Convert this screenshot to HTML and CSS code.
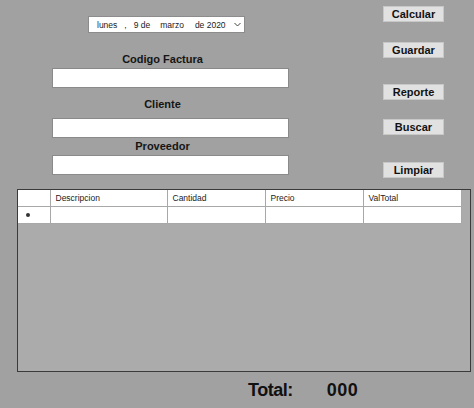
FILE: index.html
```html
<!DOCTYPE html>
<html lang="es">
<head>
<meta charset="utf-8">
<title>Factura</title>
<link rel="stylesheet" href="styles.css">
</head>
<body>
<div class="window">
  <div class="top">
    <div class="form">
      <div class="date">
        <span class="d-day">lunes</span>
        <span class="d-comma">,</span>
        <span class="d-num">9 de</span>
        <span class="d-month">marzo</span>
        <span class="d-year">de 2020</span>
        <svg class="d-chev" width="7" height="5" viewBox="0 0 7 5"><path d="M0.5 1 L3.5 4 L6.5 1" fill="none" stroke="#444" stroke-width="1"/></svg>
      </div>
      <div class="label l-codigo">Codigo Factura</div>
      <div class="field f-codigo"></div>
      <div class="label l-cliente">Cliente</div>
      <div class="field f-cliente"></div>
      <div class="label l-prov">Proveedor</div>
      <div class="field f-prov"></div>
    </div>
    <div class="buttons">
      <div class="btn b-calc">Calcular</div>
      <div class="btn b-guardar">Guardar</div>
      <div class="btn b-reporte">Reporte</div>
      <div class="btn b-buscar">Buscar</div>
      <div class="btn b-limpiar">Limpiar</div>
    </div>
  </div>
  <div class="grid">
    <table class="table">
      <tr class="head">
        <td class="c-rh"></td>
        <td class="c-desc">Descripcion</td>
        <td class="c-cant">Cantidad</td>
        <td class="c-precio">Precio</td>
        <td class="c-val">ValTotal</td>
      </tr>
      <tr class="row">
        <td class="c-rh"><span class="star"></span></td>
        <td></td>
        <td></td>
        <td></td>
        <td></td>
      </tr>
    </table>
  </div>
  <div class="total">
    <span class="t-label">Total:</span>
    <span class="t-value">000</span>
  </div>
</div>
</body>
</html>
```

FILE: styles.css
```css
* { box-sizing: border-box; }
html, body {
  margin: 0;
  padding: 0;
  background: #a1a1a1;
}
.window {
  width: 474px;
  height: 408px;
  font-family: "Liberation Sans", Arial, sans-serif;
  color: #111;
  overflow: hidden;
}
.top {
  display: flex;
  height: 189px;
}
.form {
  width: 300px;
  display: flex;
  flex-direction: column;
}
.date {
  margin: 16px 0 0 88px;
  width: 157px;
  height: 17px;
  background: #fff;
  border: 1px solid #8c8c8c;
  display: flex;
  align-items: center;
  font-size: 8.5px;
  color: #222;
  white-space: nowrap;
}
.d-day { margin-left: 8px; }
.d-comma { margin-left: 7px; }
.d-num { margin-left: 7px; }
.d-month { margin-left: 10px; }
.d-year { margin-left: 11px; }
.d-chev { margin-left: 8px; }
.label {
  margin-left: 52px;
  width: 237px;
  padding-right: 16px;
  text-align: center;
  font-weight: bold;
  font-size: 11px;
  line-height: 13px;
  color: #151515;
}
.l-codigo { margin-top: 20px; }
.l-cliente { margin-top: 10px; }
.l-prov { margin-top: 2px; }
.field {
  margin-left: 52px;
  width: 237px;
  height: 20px;
  background: #fff;
  border: 1px solid #8a8a8a;
}
.f-codigo { margin-top: 2px; }
.f-cliente { margin-top: 7px; }
.f-prov { margin-top: 2px; }
.buttons {
  margin-left: 83px;
  display: flex;
  flex-direction: column;
}
.btn {
  width: 61px;
  height: 16px;
  background: #e1e1e1;
  border: 1px solid #c8c8c8;
  font-weight: bold;
  font-size: 11px;
  line-height: 14px;
  text-align: center;
  color: #111;
}
.b-calc { margin-top: 6px; }
.b-guardar { margin-top: 20px; }
.b-reporte { margin-top: 26px; }
.b-buscar { margin-top: 19px; }
.b-limpiar { margin-top: 27px; }
.grid {
  margin-left: 17px;
  width: 454px;
  height: 183px;
  background: #ababab;
  border: 1px solid #3a3a3a;
}
.table {
  border-collapse: collapse;
  table-layout: fixed;
  width: 443px;
  background: #fff;
  font-size: 8.5px;
  color: #222;
}
.table td {
  padding: 0 0 0 5px;
  border-right: 1px solid #a8a8a8;
  border-bottom: 1px solid #a8a8a8;
  white-space: nowrap;
  overflow: hidden;
}
.head td { height: 16px; }
.row td { height: 17px; }
.c-rh { width: 32px; }
.c-desc { width: 117px; }
.c-cant { width: 98px; }
.c-precio { width: 98px; }
.c-val { width: 98px; }
.star {
  display: block;
  width: 4px;
  height: 4px;
  border-radius: 50%;
  background: #333;
  margin-left: 3px;
}
.total {
  margin-top: 8px;
  padding-left: 248px;
  display: flex;
  font-weight: bold;
  font-size: 18px;
  line-height: 20px;
  color: #111;
}
.t-label { letter-spacing: -0.5px; }
.t-value { margin-left: 34px; letter-spacing: 0.5px; }
```
